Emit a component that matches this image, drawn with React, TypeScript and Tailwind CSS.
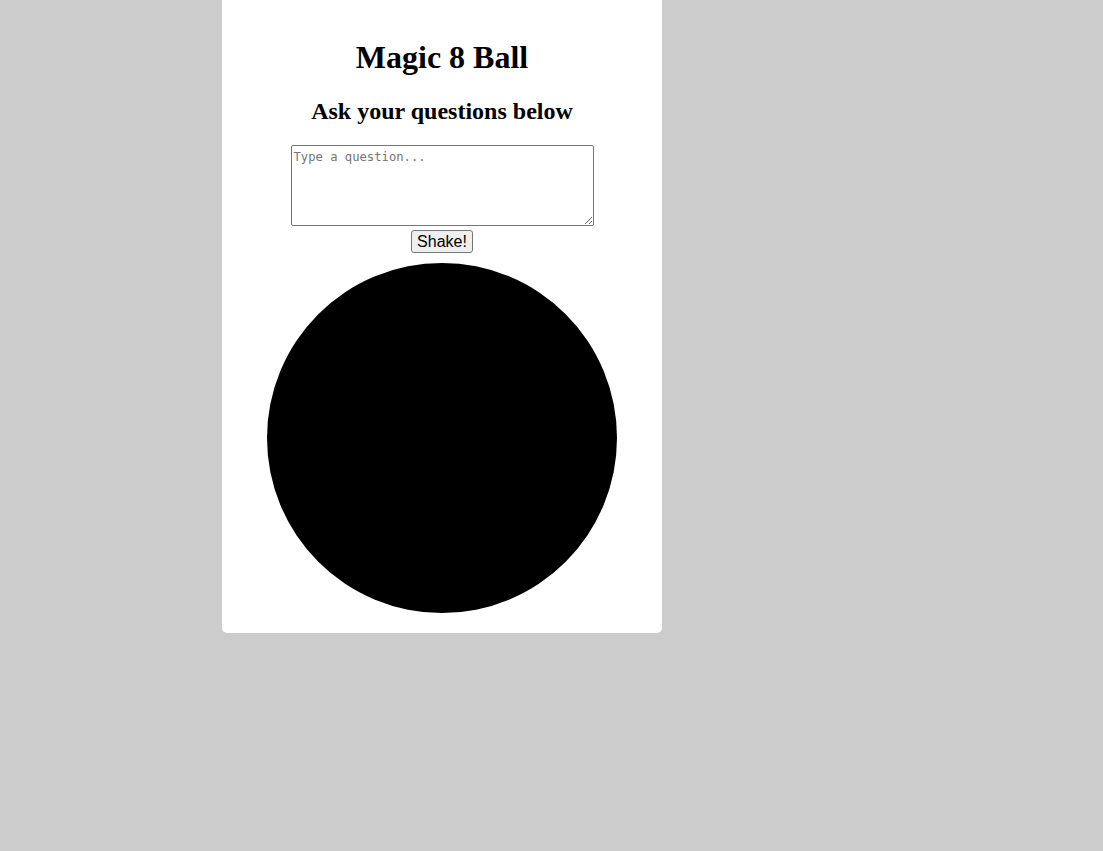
export default function App() {
  return (
    <div className="min-h-[851px] w-full bg-[#cccccc]">
      <div className="ml-[222px] flex w-[440px] flex-col items-center rounded-b-[5px] bg-white pt-[39px] pb-[20px]">
        <h1 className="text-[32px] font-bold leading-[37px] text-black [font-family:'Liberation_Serif',serif]">
          Magic 8 Ball
        </h1>
        <h2 className="mt-[21px] text-[24px] font-bold leading-[28px] text-black [font-family:'Liberation_Serif',serif]">
          Ask your questions below
        </h2>
        <textarea
          placeholder="Type a question..."
          className="mt-[20px] h-[81px] w-[303px] rounded-[2px] border border-[#767676] bg-white px-[2px] pt-[3px] pb-[1px] text-[12.2px] leading-[16px] text-black placeholder:text-[#757575] [font-family:'DejaVu_Sans_Mono',monospace]"
        />
        <button className="mt-[4px] h-[23px] w-[62px] rounded-[3px] border border-[#767676] bg-[#efefef] text-[16px] leading-[19px] text-black [font-family:'Liberation_Sans',Arial,sans-serif]">
          Shake!
        </button>
        <div className="mt-[10px] h-[350px] w-[350px] rounded-full bg-black" />
      </div>
    </div>
  );
}
